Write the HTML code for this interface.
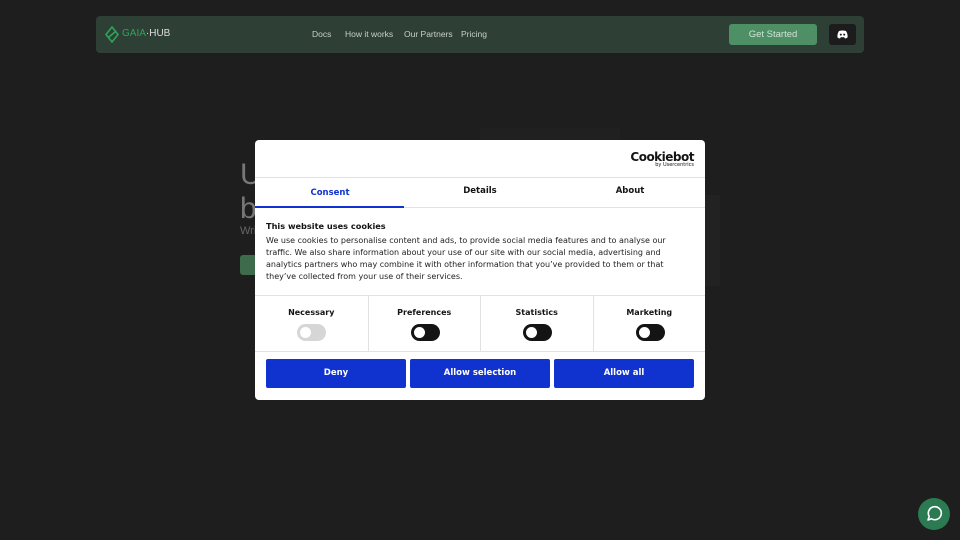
<!DOCTYPE html>
<html><head><style>
*{box-sizing:border-box;margin:0;padding:0}
body{width:960px;height:540px;background:#1e1e1e;font-family:"Liberation Sans",sans-serif;position:relative;overflow:hidden}
.hdr{position:absolute;left:96px;top:16px;width:768px;height:37px;background:#2e3f35;border-radius:4px}
.nav a{position:absolute;top:13px;color:#c9cfcb;font-size:8.5px;text-decoration:none}
.gs{position:absolute;left:633px;top:8px;width:88px;height:21px;background:#4f8f65;border-radius:3px;color:#cfe4d6;font-size:9.5px;text-align:center;line-height:21px}
.dc{position:absolute;left:733px;top:8px;width:27px;height:21px;background:#1c1c1c;border-radius:3px}
.hero{position:absolute;color:#8a8a8a}
.modal{position:absolute;left:255px;top:140px;width:450px;height:260px;background:#fff;border-radius:4px;font-family:"DejaVu Sans",sans-serif;color:#141414}
.tabs{position:absolute;top:37px;left:0;width:450px;height:31px;border-top:1px solid #e2e2e2;border-bottom:1px solid #e2e2e2}
.tab{position:absolute;top:8px;width:150px;text-align:center;font-size:8.5px;font-weight:bold}
.cell{position:absolute;top:155px;height:57px;width:112.5px;border-top:1px solid #e2e2e2;border-bottom:1px solid #e2e2e2;text-align:center;font-size:8px;font-weight:bold;padding-top:12px}
.tg{position:absolute;left:42px;top:28px;width:29px;height:17px;border-radius:9px;background:#141414}
.tg::after{content:"";position:absolute;left:3px;top:3px;width:11px;height:11px;border-radius:50%;background:#fff}
.btn{position:absolute;top:219px;width:140px;height:29px;background:#1032cf;border-radius:2px;color:#fff;font-size:8.5px;font-weight:bold;text-align:center;line-height:29px}
</style></head><body>
<div class="hdr">
 <svg style="position:absolute;left:8px;top:10px" width="16" height="17" viewBox="0 0 16 17"><path d="M8 1 L14 8.5 L8 16 L2 8.5Z M5 11 L11 6" fill="none" stroke="#2fa35a" stroke-width="1.6"/></svg>
 <div style="position:absolute;left:26px;top:12px;font-size:10px;letter-spacing:0"><span style="color:#2fa35a">GAIA</span><span style="color:#ddd">·HUB</span></div>
 <div class="nav"><a style="left:216px">Docs</a><a style="left:249px">How it works</a><a style="left:308px">Our Partners</a><a style="left:365px">Pricing</a></div>
 <div class="gs">Get Started</div>
 <div class="dc"><svg style="position:absolute;left:8px;top:6px" width="11" height="9" viewBox="0 0 11 9"><path d="M2 1 Q5.5 0 9 1 Q11 4 10.5 7.5 Q9 8.5 8 8.5 L7 7 Q5.5 7.5 4 7 L3 8.5 Q2 8.5 0.5 7.5 Q0 4 2 1Z" fill="#fff"/><circle cx="3.8" cy="4.6" r="1" fill="#1c1c1c"/><circle cx="7.2" cy="4.6" r="1" fill="#1c1c1c"/></svg></div>
</div>
<div class="hero" style="left:240px;top:158px;font-size:30px;color:#777">U</div>
<div class="hero" style="left:240px;top:192px;font-size:30px;color:#777">b</div>
<div class="hero" style="left:240px;top:225px;font-size:11px;color:#666">Wri</div>
<div style="position:absolute;left:240px;top:255px;width:20px;height:20px;background:#3d6b4c;border-radius:3px"></div>
<div style="position:absolute;left:480px;top:128px;width:140px;height:12px;background:#202020"></div>
<div style="position:absolute;left:705px;top:195px;width:15px;height:91px;background:#222"></div>
<div class="modal">
 <div style="position:absolute;right:11px;top:11px;text-align:right;line-height:1"><div style="font-size:12px;font-weight:bold;letter-spacing:-0.5px">Cookiebot</div><div style="font-size:5px">by Usercentrics</div></div>
 <div class="tabs">
  <div class="tab" style="left:0;color:#1032cf;top:10px">Consent</div>
  <div style="position:absolute;left:0;top:28px;width:149px;height:2px;background:#1032cf"></div>
  <div class="tab" style="left:150px">Details</div>
  <div class="tab" style="left:300px">About</div>
 </div>
 <div style="position:absolute;left:11px;top:81px;font-size:8.2px;font-weight:bold">This website uses cookies</div>
 <div style="position:absolute;left:11px;top:95px;width:410px;font-size:8px;line-height:12px;color:#222">We use cookies to personalise content and ads, to provide social media features and to analyse our traffic. We also share information about your use of our site with our social media, advertising and analytics partners who may combine it with other information that you’ve provided to them or that they’ve collected from your use of their services.</div>
 <div class="cell" style="left:0">Necessary<div class="tg" style="background:#d6d6d6"></div></div>
 <div class="cell" style="left:112.5px;border-left:1px solid #e2e2e2">Preferences<div class="tg"></div></div>
 <div class="cell" style="left:225px;border-left:1px solid #e2e2e2">Statistics<div class="tg"></div></div>
 <div class="cell" style="left:337.5px;border-left:1px solid #e2e2e2">Marketing<div class="tg"></div></div>
 <div class="btn" style="left:11px">Deny</div>
 <div class="btn" style="left:155px">Allow selection</div>
 <div class="btn" style="left:299px">Allow all</div>
</div>
<div style="position:absolute;left:918px;top:498px;width:32px;height:32px;border-radius:50%;background:#2b7a52"></div>
<svg style="position:absolute;left:925px;top:505px" width="18" height="18" viewBox="0 0 18 18"><path d="M3 15 L4.2 11.5 A6.5 6.5 0 1 1 6.5 13.8 Z" fill="none" stroke="#fff" stroke-width="1.6" stroke-linejoin="round"/></svg>
</body></html>
